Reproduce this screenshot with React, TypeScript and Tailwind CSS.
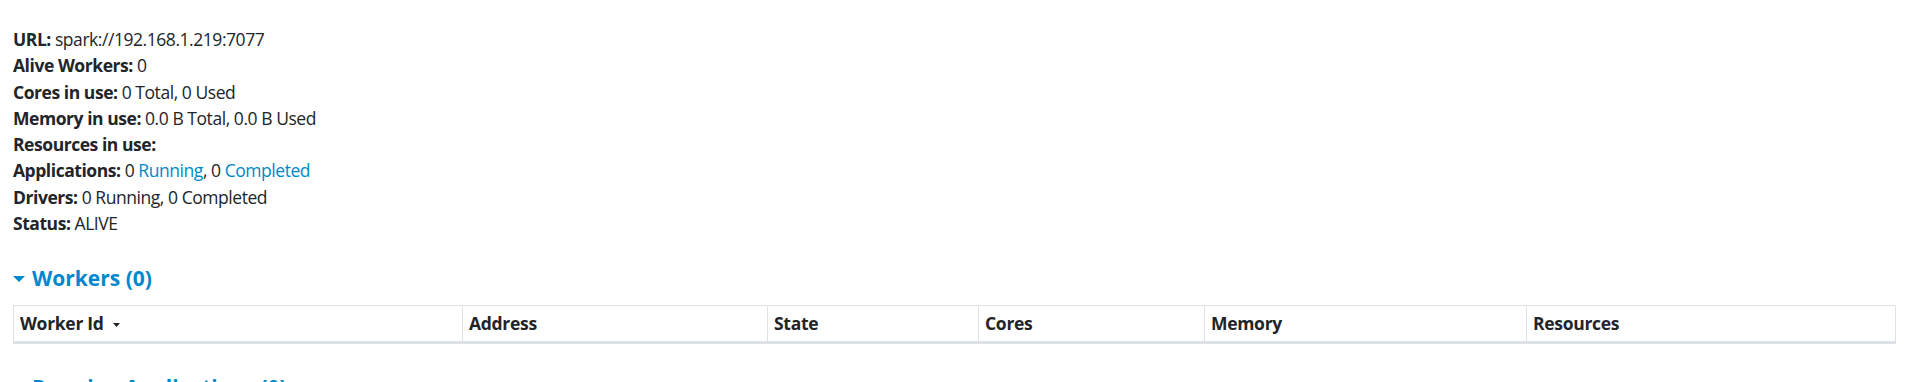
const info: { label: string; value: React.ReactNode }[] = [
  { label: 'URL:', value: 'spark://192.168.1.219:7077' },
  { label: 'Alive Workers:', value: '0' },
  { label: 'Cores in use:', value: '0 Total, 0 Used' },
  { label: 'Memory in use:', value: '0.0 B Total, 0.0 B Used' },
  { label: 'Resources in use:', value: '' },
  {
    label: 'Applications:',
    value: (
      <>
        0 <a className="text-[#0088cc]">Running</a>, 0 <a className="text-[#0088cc]">Completed</a>
      </>
    ),
  },
  { label: 'Drivers:', value: '0 Running, 0 Completed' },
  { label: 'Status:', value: 'ALIVE' },
];

const columns = [
  { name: 'Worker Id', width: 449, sorted: true },
  { name: 'Address', width: 305 },
  { name: 'State', width: 211 },
  { name: 'Cores', width: 226 },
  { name: 'Memory', width: 322 },
  { name: 'Resources', width: 369 },
];

const Caret = () => (
  <svg width="12" height="6" viewBox="0 0 12 6" className="inline-block mr-[7px] align-middle">
    <path d="M0 0 H12 L6 6 Z" fill="#0088cc" />
  </svg>
);

const SectionHeading = ({ title }: { title: string }) => (
  <h4 className="flex items-center text-[21px] leading-[25px] font-bold text-[#0088cc]">
    <Caret />
    <span>{title}</span>
  </h4>
);

export default function App() {
  return (
    <div className="min-h-screen bg-white text-[#212529] font-['Segoe_UI','Open_Sans',sans-serif] text-[17.5px] leading-[26.25px] pl-[13px] pr-[19px] pt-[26px] overflow-hidden">
      {/* Master summary */}
      <ul className="list-none tracking-[-0.45px]">
        {info.map((row) => (
          <li key={row.label}>
            <strong className="font-bold">{row.label}</strong> {row.value}
          </li>
        ))}
      </ul>

      {/* Workers */}
      <div className="mt-[30px]">
        <SectionHeading title="Workers (0)" />
        <table className="mt-[14px] w-full table-fixed border-collapse border border-[#dee2e6]">
          <colgroup>
            {columns.map((c) => (
              <col key={c.name} style={{ width: c.width }} />
            ))}
          </colgroup>
          <thead>
            <tr className="border-b-[3px] border-[#dee2e6]">
              {columns.map((c) => (
                <th
                  key={c.name}
                  className="border-x border-[#dee2e6] px-[6px] pt-[4px] pb-[5px] text-left font-bold whitespace-nowrap tracking-[-0.3px]"
                >
                  {c.name}
                  {c.sorted && (
                    <svg width="7" height="4" viewBox="0 0 7 4" className="inline-block ml-[9px] align-middle">
                      <path d="M0 0 H7 L3.5 4 Z" fill="#212529" />
                    </svg>
                  )}
                </th>
              ))}
            </tr>
          </thead>
        </table>
      </div>

      {/* Running Applications */}
      <div className="mt-[31px]">
        <SectionHeading title="Running Applications (0)" />
      </div>
    </div>
  );
}
